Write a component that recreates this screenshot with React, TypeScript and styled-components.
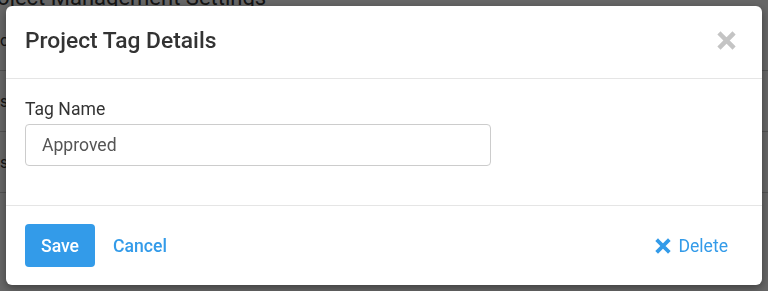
import React from 'react';
import styled, { createGlobalStyle } from 'styled-components';

const GlobalStyle = createGlobalStyle`
  html, body {
    margin: 0;
    padding: 0;
    background: #ffffff;
    font-family: Roboto, "Noto Sans", Arial, sans-serif;
    overflow: hidden;
  }
`;

const Page = styled.div`
  height: 291px;
  overflow: hidden;
  color: #333;
`;

const PageTitle = styled.h1`
  margin: -14px 0 0 -24px;
  font-size: 22px;
  font-weight: 400;
  line-height: 24px;
  white-space: nowrap;
`;

const PageRow = styled.div`
  height: 60px;
  border-bottom: 1px solid #ccc;
  font-size: 16px;
  display: flex;
  align-items: center;
`;

const Overlay = styled.div`
  position: fixed;
  inset: 0;
  background: rgba(0, 0, 0, 0.6);
`;

const Modal = styled.div`
  width: 756px;
  margin: 6px 0 0 6px;
  background: #fff;
  border-radius: 6px;
  box-shadow: 0 3px 9px rgba(0, 0, 0, 0.4);
`;

const Header = styled.div`
  height: 72px;
  padding: 0 26px 0 19px;
  display: flex;
  align-items: center;
  justify-content: space-between;
  border-bottom: 1px solid #e5e5e5;
`;

const Title = styled.h4`
  margin: -4px 0 0;
  font-size: 22.8px;
  font-weight: 500;
  color: #333;
`;

const Close = styled.button`
  border: 0;
  background: none;
  padding: 0;
  margin-top: -4px;
  display: flex;
  cursor: pointer;
`;

const Body = styled.div`
  height: 127px;
  box-sizing: border-box;
  padding: 20px 19px 0;
  border-bottom: 1px solid #e5e5e5;
`;

const Label = styled.label`
  display: block;
  font-size: 17.6px;
  color: #333;
  margin-bottom: 5px;
`;

const Input = styled.input`
  box-sizing: border-box;
  width: 466px;
  height: 42px;
  padding: 0 16px;
  border: 1px solid #ccc;
  border-radius: 4px;
  font-family: inherit;
  font-size: 17.6px;
  color: #555;
  outline: none;
`;

const Footer = styled.div`
  height: 79px;
  box-sizing: border-box;
  padding: 0 34px 0 19px;
  display: flex;
  align-items: center;
  gap: 18px;
`;

const SaveButton = styled.button`
  height: 43px;
  padding: 0 16px;
  border: 0;
  border-radius: 4px;
  background: #339be9;
  color: #fff;
  font-family: inherit;
  font-size: 17.6px;
  font-weight: 500;
  cursor: pointer;
`;

const LinkButton = styled.button<{ $push?: boolean }>`
  border: 0;
  background: none;
  padding: 0;
  margin-left: ${(p) => (p.$push ? 'auto' : '0')};
  color: #339be9;
  font-family: inherit;
  font-size: 17.6px;
  font-weight: ${(p) => (p.$push ? 400 : 500)};
  display: flex;
  align-items: center;
  gap: 7px;
  cursor: pointer;
`;

const Times = ({ size, color }: { size: number; color: string }) => (
  <svg width={size} height={size} viewBox="0 0 16 16" fill="none">
    <path d="M3 3 L13 13 M13 3 L3 13" stroke={color} strokeWidth="3.8" strokeLinecap="square" />
  </svg>
);

export default function App() {
  return (
    <>
      <GlobalStyle />
      <Page>
        <PageTitle>Project Management Settings</PageTitle>
        <PageRow>oj</PageRow>
        <PageRow>s</PageRow>
        <PageRow>s</PageRow>
      </Page>
      <Overlay>
        <Modal>
          <Header>
            <Title>Project Tag Details</Title>
            <Close aria-label="Close">
              <Times size={19} color="#c4c4c4" />
            </Close>
          </Header>
          <Body>
            <Label>Tag Name</Label>
            <Input defaultValue="Approved" />
          </Body>
          <Footer>
            <SaveButton>Save</SaveButton>
            <LinkButton>Cancel</LinkButton>
            <LinkButton $push>
              <Times size={16} color="#339be9" />
              Delete
            </LinkButton>
          </Footer>
        </Modal>
      </Overlay>
    </>
  );
}
